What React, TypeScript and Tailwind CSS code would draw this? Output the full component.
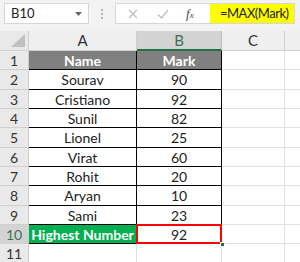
import React from "react";

const rows: { a: string; b: string }[] = [
  { a: "Name", b: "Mark" },
  { a: "Sourav", b: "90" },
  { a: "Cristiano", b: "92" },
  { a: "Sunil", b: "82" },
  { a: "Lionel", b: "25" },
  { a: "Virat", b: "60" },
  { a: "Rohit", b: "20" },
  { a: "Aryan", b: "10" },
  { a: "Sami", b: "23" },
  { a: "Highest Number", b: "92" },
];

const heights = [19, 20, 19, 19, 20, 19, 19, 20, 19, 19];

function RowHeader({ n, h, selected }: { n: number; h: number; selected?: boolean }) {
  return (
    <div
      className={
        "w-[29px] shrink-0 flex items-center justify-center border-r border-b border-[#cfcfcf] text-[14px] " +
        (selected ? "bg-[#d3d3d3] text-[#3f6e52]" : "bg-[#e9e9e9] text-[#333]")
      }
      style={{ height: h }}
    >
      {n}
    </div>
  );
}

export default function App() {
  return (
    <div
      className="w-[300px] h-[262px] overflow-hidden bg-white relative"
      style={{ fontFamily: "Lato, 'Liberation Sans', sans-serif" }}
    >
      {/* formula bar */}
      <div className="h-[31px] bg-[#f3f3f3] flex items-start pt-[3px]">
        <div className="ml-[4px] w-[85px] h-[21px] bg-white border border-[#d6d6d6] flex items-center justify-between pl-[6px] pr-[6px] text-[13px] text-[#222]">
          <span>B10</span>
          <svg width="7" height="4" viewBox="0 0 7 4">
            <path d="M0 0 L7 0 L3.5 4 Z" fill="#666" />
          </svg>
        </div>
        <div className="w-[26px] h-[21px] flex flex-col items-center justify-center gap-[2px]">
          <div className="w-[2px] h-[2px] bg-[#b5b5b5]" />
          <div className="w-[2px] h-[2px] bg-[#b5b5b5]" />
          <div className="w-[2px] h-[2px] bg-[#b5b5b5]" />
        </div>
        <div className="w-[180px] h-[21px] bg-white border border-[#d6d6d6] flex items-stretch">
          <div className="w-[94px] flex items-center">
            <svg className="ml-[12px]" width="10" height="10" viewBox="0 0 10 10">
              <path d="M1 1 L9 9 M9 1 L1 9" stroke="#bdbdbd" strokeWidth="1.2" />
            </svg>
            <svg className="ml-[19px]" width="12" height="10" viewBox="0 0 12 10">
              <path d="M1 5.5 L4.5 9 L11 1" stroke="#bdbdbd" strokeWidth="1.3" fill="none" />
            </svg>
            <span
              className="ml-[17px] text-[13px] italic text-[#444]"
              style={{ fontFamily: "'Liberation Serif', serif" }}
            >
              f<span className="text-[9px]">x</span>
            </span>
          </div>
          <div className="flex-1 bg-[#ffff00] flex items-center pl-[10px] text-[13px] tracking-[-0.5px] text-[#222]">
            =MAX(Mark)
          </div>
        </div>
      </div>

      {/* column header */}
      <div className="flex h-[20px] text-[15px]">
        <div className="w-[29px] shrink-0 bg-[#e9e9e9] border-r border-b border-[#cfcfcf] relative">
          <svg className="absolute right-[3px] bottom-[3px]" width="14" height="13" viewBox="0 0 14 13">
            <path d="M14 0 L14 13 L0 13 Z" fill="#c1c1c1" />
          </svg>
        </div>
        <div className="w-[108px] shrink-0 bg-[#efefef] border-r border-b border-[#cfcfcf] flex items-center justify-center text-[#333]">
          A
        </div>
        <div className="w-[85px] shrink-0 bg-[#d3d3d3] border-r border-[#bdbdbd] border-b-2 border-b-[#217346] flex items-center justify-center text-[#3f6e52]">
          B
        </div>
        <div className="w-[63px] shrink-0 bg-[#efefef] border-r border-b border-[#cfcfcf] flex items-center justify-center text-[#333]">
          C
        </div>
        <div className="flex-1 bg-[#efefef] border-b border-[#cfcfcf]" />
      </div>

      {/* rows */}
      {rows.map((r, i) => {
        const h = heights[i];
        const isHead = i === 0;
        const isLast = i === rows.length - 1;
        return (
          <div key={i} className="flex text-[14px] text-[#222]" style={{ height: h }}>
            <RowHeader n={i + 1} h={h} selected={isLast} />
            <div
              className={
                "w-[108px] shrink-0 flex items-center justify-center border-r border-b border-black " +
                (isHead
                  ? "bg-[#808080] text-white font-bold"
                  : isLast
                  ? "bg-[#00b050] text-white font-bold"
                  : "")
              }
            >
              {r.a}
            </div>
            <div
              className={
                "w-[85px] shrink-0 flex items-center justify-center border-r border-b border-black relative " +
                (isHead ? "bg-[#808080] text-white font-bold" : "")
              }
            >
              {r.b}
              {isLast && (
                <>
                  <div className="absolute left-[-1px] top-[-1px] right-[-1px] bottom-[-1px] border-2 border-[#ff0000]" />
                  <div className="absolute right-[-4px] bottom-[-4px] w-[5px] h-[5px] bg-[#217346] border border-white" />
                </>
              )}
            </div>
            <div className="w-[63px] shrink-0 border-r border-b border-[#e1e1e1]" />
            <div className="flex-1 border-b border-[#e1e1e1]" />
          </div>
        );
      })}
      <div className="flex text-[14px]" style={{ height: 20 }}>
        <RowHeader n={11} h={20} />
        <div className="w-[108px] shrink-0 border-r border-[#e1e1e1]" />
        <div className="w-[85px] shrink-0 border-r border-[#e1e1e1]" />
        <div className="w-[63px] shrink-0 border-r border-[#e1e1e1]" />
        <div className="flex-1" />
      </div>
    </div>
  );
}
